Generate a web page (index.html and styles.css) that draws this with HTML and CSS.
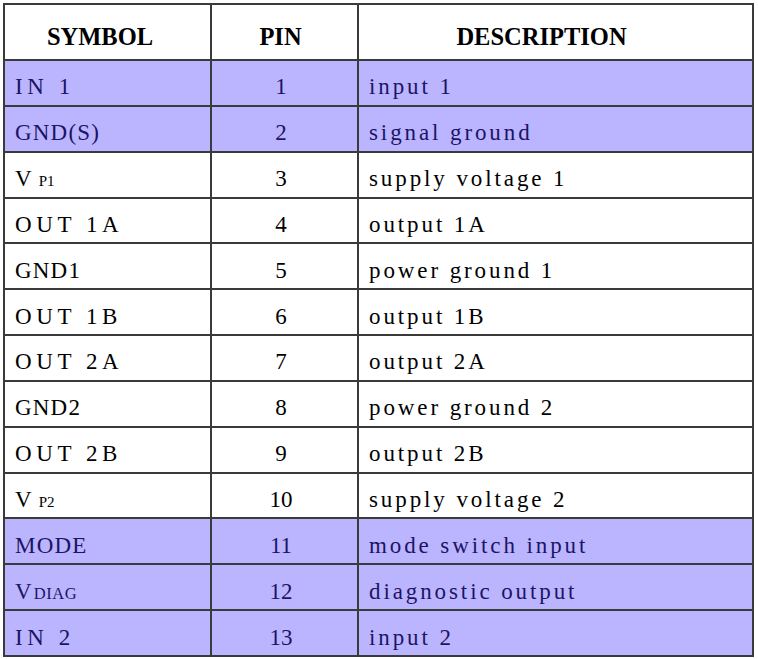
FILE: index.html
```html
<!DOCTYPE html>
<html>
<head>
<meta charset="utf-8">
<link rel="stylesheet" href="styles.css">
</head>
<body>
<table class="pins">
  <colgroup>
    <col class="c1"><col class="c2"><col class="c3">
  </colgroup>
  <thead>
    <tr><th class="h1">SYMBOL</th><th class="h2">PIN</th><th class="h3">DESCRIPTION</th></tr>
  </thead>
  <tbody>
    <tr class="hl"><td class="sym sp">IN 1</td><td class="pin">1</td><td class="desc">input 1</td></tr>
    <tr class="hl"><td class="sym tight">GND(S)</td><td class="pin">2</td><td class="desc">signal ground</td></tr>
    <tr><td class="sym">V<span class="sub">P1</span></td><td class="pin">3</td><td class="desc">supply voltage 1</td></tr>
    <tr><td class="sym sp">OUT 1A</td><td class="pin">4</td><td class="desc">output 1A</td></tr>
    <tr><td class="sym tight">GND1</td><td class="pin">5</td><td class="desc">power ground 1</td></tr>
    <tr><td class="sym sp">OUT 1B</td><td class="pin">6</td><td class="desc">output 1B</td></tr>
    <tr><td class="sym sp">OUT 2A</td><td class="pin">7</td><td class="desc">output 2A</td></tr>
    <tr><td class="sym tight">GND2</td><td class="pin">8</td><td class="desc">power ground 2</td></tr>
    <tr><td class="sym sp">OUT 2B</td><td class="pin">9</td><td class="desc">output 2B</td></tr>
    <tr><td class="sym">V<span class="sub">P2</span></td><td class="pin">10</td><td class="desc">supply voltage 2</td></tr>
    <tr class="hl"><td class="sym tight">MODE</td><td class="pin">11</td><td class="desc">mode switch input</td></tr>
    <tr class="hl"><td class="sym">V<span class="sub2">DIAG</span></td><td class="pin">12</td><td class="desc">diagnostic output</td></tr>
    <tr class="hl"><td class="sym sp">IN 2</td><td class="pin">13</td><td class="desc">input 2</td></tr>
  </tbody>
</table>
</body>
</html>
```

FILE: styles.css
```css
html, body {
  margin: 0;
  padding: 0;
  background: #ffffff;
}
body {
  padding: 3px 0 0 3px;
  font-family: "Liberation Serif", "Times New Roman", serif;
}
.pins {
  border-collapse: collapse;
  table-layout: fixed;
  width: 749px;
  border: 2px solid #3a3a3a;
  font-family: "Liberation Serif", "Times New Roman", serif;
}
.c1 { width: 207px; }
.c2 { width: 147px; }
.c3 { width: 395px; }
.pins th, .pins td {
  border: 2px solid #3a3a3a;
  padding: 0;
}
.pins thead tr { height: 56px; }
.pins th {
  font-size: 24.5px;
  font-weight: bold;
  color: #000;
  text-align: center;
  vertical-align: middle;
  padding-top: 9px;
}
.pins th.h1 { padding-right: 15px; }
.pins th.h2 { padding-right: 8px; }
.pins th.h3 { padding-right: 28px; }
.pins tbody tr { height: 45.85px; }
.pins td {
  font-size: 23px;
  color: #000;
  vertical-align: middle;
  padding-top: 8px;
  line-height: 1;
}
.hl td {
  background: #bbb4fe;
  color: #1c1466;
}
.hl td + td {
  border-left-color: #241c5e;
}
.pins td.sym { padding-left: 10px; }
.sym.sp { letter-spacing: 4.6px; }
.sym.tight { letter-spacing: 1.2px; }
.pins td.pin { text-align: center; padding-right: 7px; }
.pins td.desc { padding-left: 10px; letter-spacing: 2.9px; }
.sub {
  font-size: 15px;
  margin-left: 7px;
}
.sub2 {
  font-size: 16.5px;
  margin-left: 2px;
  letter-spacing: 0.6px;
}
```
